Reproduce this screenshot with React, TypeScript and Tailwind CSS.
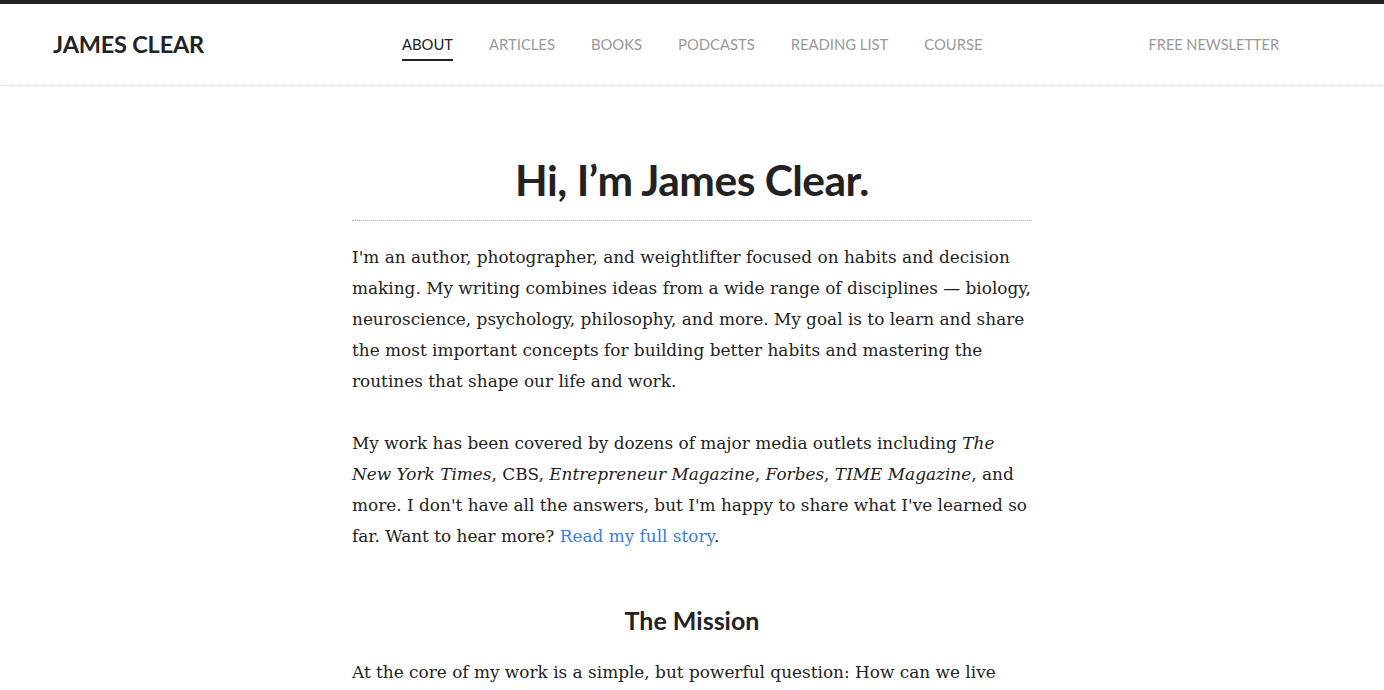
import React from "react";

const navItems = ["ABOUT", "ARTICLES", "BOOKS", "PODCASTS", "READING LIST", "COURSE"];

const Header = () => {
  return (
    <header className="border-t-4 border-[#222] border-b border-b-[#d6d6d6] [border-bottom-style:dotted] bg-white">
      <div className="h-[81px] flex items-center px-[53px] font-['Lato',sans-serif]">
        <div className="w-[349px] text-[23.5px] font-bold text-[#222] tracking-[-0.2px]">JAMES CLEAR</div>
        <nav className="flex items-center gap-[36px]">
          {navItems.map((item, i) => (
            <a
              key={item}
              className={
                i === 0
                  ? "relative text-[14.8px] text-[#222] pb-[3px] border-b-2 border-[#222] mt-[5px]"
                  : "text-[14.8px] text-[#999] mt-[5px] pb-[5px]"
              }
            >
              {item}
            </a>
          ))}
        </nav>
        <a className="ml-auto mr-[52px] text-[14.5px] text-[#999] mt-[5px] pb-[5px] font-['Lato',sans-serif]">
          FREE NEWSLETTER
        </a>
      </div>
    </header>
  );
};

const App = () => {
  return (
    <div className="min-h-[690px] bg-white overflow-hidden">
      <Header />
      <main className="w-[680px] mx-auto pt-[70px]">
        <h1 className="text-center font-['Lato',sans-serif] font-bold text-[42.5px] text-[#222] leading-[48px] pb-[16px] border-b border-dotted border-[#aaa] tracking-[-0.5px]">
          Hi, I’m James Clear.
        </h1>
        <div className="font-['DejaVu_Serif',serif] text-[16.9px] leading-[31px] text-[#222] mt-[21px]">
          <p>
            I'm an author, photographer, and weightlifter focused on habits and decision making. My writing combines ideas from a wide range of disciplines — biology, neuroscience, psychology, philosophy, and more. My goal is to learn and share the most important concepts for building better habits and mastering the routines that shape our life and work.
          </p>
          <p className="mt-[31px]">
            My work has been covered by dozens of major media outlets including <em>The New York Times</em>, CBS, <em>Entrepreneur Magazine</em>, <em>Forbes</em>, <em>TIME Magazine</em>, and more. I don't have all the answers, but I'm happy to share what I've learned so far. Want to hear more? <a className="text-[#3b7dd8]">Read my full story</a>.
          </p>
        </div>
        <h2 className="text-center font-['Lato',sans-serif] font-bold text-[25px] text-[#222] mt-[52px] leading-[32px]">
          The Mission
        </h2>
        <p className="font-['DejaVu_Serif',serif] text-[16.9px] leading-[31px] text-[#222] mt-[21px]">
          At the core of my work is a simple, but powerful question: How can we live better? To answer that question, I like to write about science-based ways to solve practical problems.
        </p>
      </main>
    </div>
  );
};

export default App;
